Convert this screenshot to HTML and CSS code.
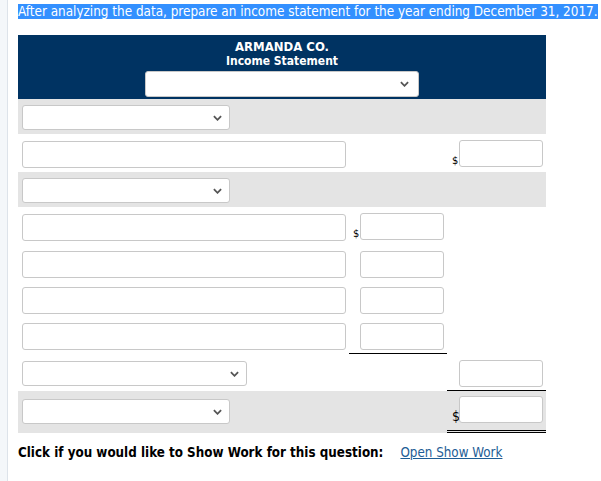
FILE: index.html
```html
<!DOCTYPE html>
<html>
<head>
<meta charset="utf-8">
<link rel="stylesheet" href="styles.css">
</head>
<body>
<div class="page">
  <p class="intro"><span class="hl">After analyzing the data, prepare an income statement for the year ending December 31, 2017.</span></p>

  <div class="stmt">
    <div class="head">
      <div class="company">ARMANDA CO.</div>
      <div class="title">Income Statement</div>
      <div class="sel sel-head"><select></select><svg class="chev" viewBox="0 0 10 6"><path d="M1 1l4 4 4-4"/></svg></div>
    </div>

    <div class="row gray r35">
      <div class="c1 pt6"><div class="sel w208"><select></select><svg class="chev" viewBox="0 0 10 6"><path d="M1 1l4 4 4-4"/></svg></div></div>
      <div class="c2"></div>
      <div class="c3"></div>
    </div>

    <div class="row r38">
      <div class="c1 pt7"><input class="txt" type="text"></div>
      <div class="c2"></div>
      <div class="c3 pt6"><span class="dol">$</span><input class="num" type="text"></div>
    </div>

    <div class="row gray r35">
      <div class="c1 pt6"><div class="sel w208"><select></select><svg class="chev" viewBox="0 0 10 6"><path d="M1 1l4 4 4-4"/></svg></div></div>
      <div class="c2"></div>
      <div class="c3"></div>
    </div>

    <div class="row r37">
      <div class="c1 pt7"><input class="txt" type="text"></div>
      <div class="c2 pt6"><span class="dol">$</span><input class="num" type="text"></div>
      <div class="c3"></div>
    </div>

    <div class="row r36">
      <div class="c1 pt7"><input class="txt" type="text"></div>
      <div class="c2 pt7"><span class="dol"></span><input class="num" type="text"></div>
      <div class="c3"></div>
    </div>

    <div class="row r36">
      <div class="c1 pt7"><input class="txt" type="text"></div>
      <div class="c2 pt7"><span class="dol"></span><input class="num" type="text"></div>
      <div class="c3"></div>
    </div>

    <div class="row r38">
      <div class="c1 pt7"><input class="txt" type="text"></div>
      <div class="c2 pt7 under"><span class="dol"></span><input class="num" type="text"></div>
      <div class="c3"></div>
    </div>

    <div class="row r37">
      <div class="c1 pt7"><div class="sel w225"><select></select><svg class="chev" viewBox="0 0 10 6"><path d="M1 1l4 4 4-4"/></svg></div></div>
      <div class="c2"></div>
      <div class="c3 pt6 under"><span class="dol"></span><input class="num" type="text"></div>
    </div>

    <div class="row gray r42">
      <div class="c1 pt8"><div class="sel w208"><select></select><svg class="chev" viewBox="0 0 10 6"><path d="M1 1l4 4 4-4"/></svg></div></div>
      <div class="c2"></div>
      <div class="c3 pt5 dbl"><span class="dol big">$</span><input class="num" type="text"></div>
    </div>
  </div>

  <p class="work"><b>Click if you would like to Show Work for this question:</b><a class="link" href="#">Open Show Work</a></p>
</div>
</body>
</html>
```

FILE: styles.css
```css
html, body {
  margin: 0;
  padding: 0;
}
body {
  background: #f4f7fa;
  font-family: "DejaVu Sans Condensed", "DejaVu Sans", sans-serif;
  color: #000;
}
.page {
  margin-left: 7px;
  border-left: 1px solid #dde3ea;
  background: #fff;
  min-height: 481px;
  padding-left: 10px;
  padding-top: 5px;
}
.intro {
  margin: 0;
  font-size: 13.4px;
  line-height: 14px;
  white-space: nowrap;
}
.hl {
  background: #3390ff;
  color: #fff;
}
.stmt {
  margin-top: 16px;
  width: 528px;
}
.head {
  background: #003362;
  height: 64px;
  box-sizing: border-box;
  padding-top: 5px;
  display: flex;
  flex-direction: column;
  align-items: center;
  color: #fff;
  font-weight: bold;
  font-size: 12px;
  line-height: 14px;
}
.company {
  font-size: 13px;
}
.title {
  margin-bottom: 3px;
}
.row {
  display: grid;
  grid-template-columns: 331px 98px 99px;
  box-sizing: border-box;
}
.gray {
  background: #e4e4e4;
}
.r35 { height: 35px; }
.r36 { height: 36px; }
.r37 { height: 37px; }
.r38 { height: 38px; }
.r42 { height: 42px; }
.pt5 { padding-top: 5px; }
.pt6 { padding-top: 6px; }
.pt7 { padding-top: 7px; }
.pt8 { padding-top: 8px; }
.c1 {
  padding-left: 4px;
}
.c2, .c3 {
  display: flex;
  align-items: flex-start;
  box-sizing: border-box;
}
.c2 { padding-left: 4px; }
.c3 { padding-left: 5px; }
.under {
  border-bottom: 1px solid #000;
}
.dbl {
  border-bottom: 3px double #000;
}
.dol {
  width: 7px;
  align-self: flex-start;
  margin-top: 15px;
  font-size: 11px;
  line-height: 11px;
  color: #000;
}
.dol.big {
  font-size: 14px;
  line-height: 14px;
  margin-top: 13px;
}
input {
  box-sizing: border-box;
  border: 1px solid #c8c8c8;
  border-radius: 3px;
  background: #fff;
  margin: 0;
  padding: 0 4px;
  font: inherit;
  outline: none;
}
.txt {
  width: 324px;
  height: 27px;
}
.num {
  width: 84px;
  height: 27px;
}
.sel {
  position: relative;
}
.sel select {
  -webkit-appearance: none;
  appearance: none;
  box-sizing: border-box;
  width: 100%;
  height: 25px;
  border: 1px solid #c8c8c8;
  border-radius: 3px;
  background: #fff;
  margin: 0;
  display: block;
}
.w208 { width: 208px; }
.w225 { width: 225px; }
.sel-head {
  width: 274px;
  margin-top: 0;
}
.sel-head select {
  height: 26px;
}
.chev {
  position: absolute;
  right: 8px;
  top: 10px;
  width: 9px;
  height: 6px;
  fill: none;
  stroke: #555;
  stroke-width: 2;
}
.sel-head .chev {
  right: 10px;
}
.work {
  margin: 12px 0 0 0;
  font-size: 13.3px;
  line-height: 15px;
}
.link {
  margin-left: 17px;
  color: #1d5d96;
  text-decoration: underline;
}
```
